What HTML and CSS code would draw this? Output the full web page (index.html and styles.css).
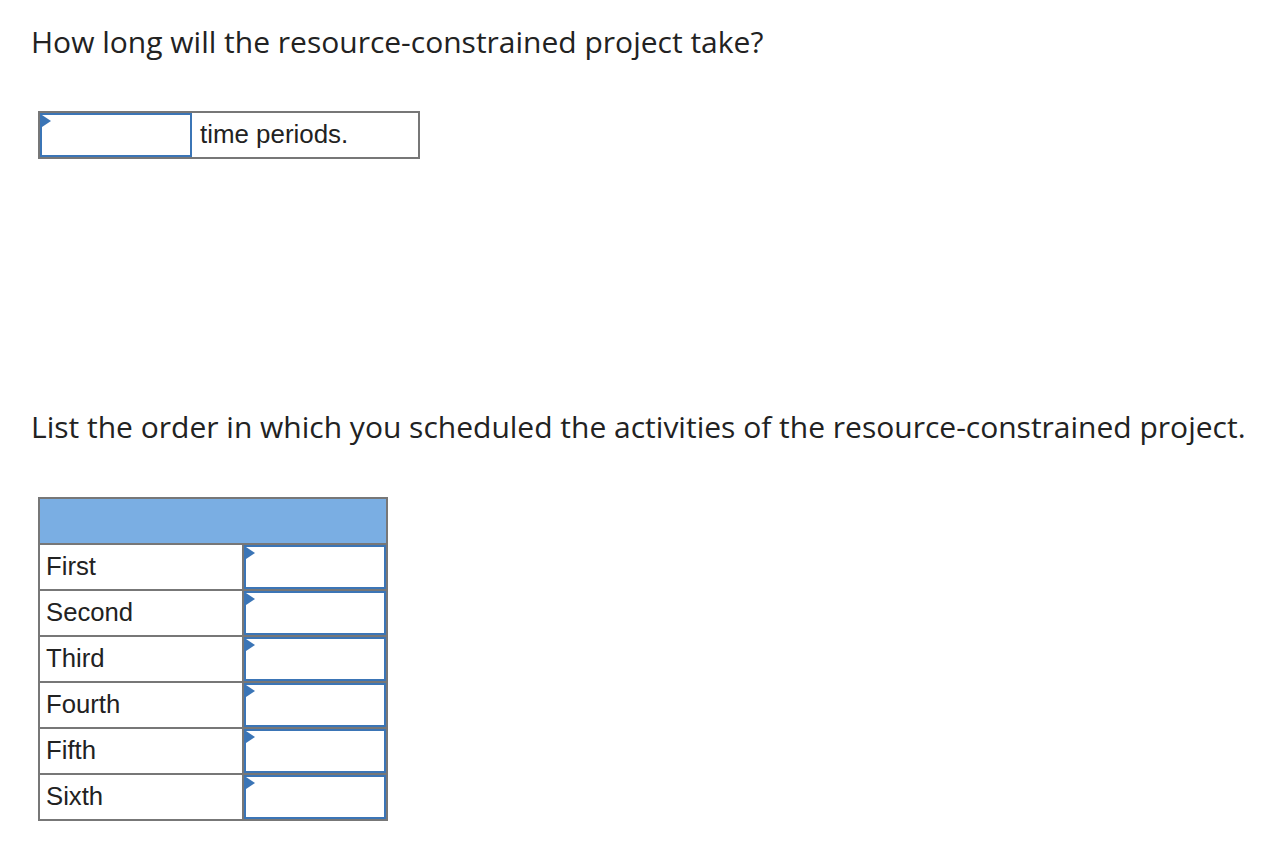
FILE: index.html
```html
<!DOCTYPE html>
<html lang="en">
<head>
<meta charset="utf-8">
<title>Resource-constrained project</title>
<link rel="stylesheet" href="styles.css">
</head>
<body>
<main class="page">
  <p class="question q1">How long will the resource-constrained project take?</p>
  <div class="answer-box">
    <div class="input-cell"><span class="marker"></span></div>
    <div class="text-cell">time periods.</div>
  </div>

  <p class="question q2">List the order in which you scheduled the activities of the resource-constrained project.</p>
  <div class="order-table">
    <div class="header-cell"></div>
    <div class="label-cell">First</div>
    <div class="input-cell"><span class="marker"></span></div>
    <div class="label-cell">Second</div>
    <div class="input-cell"><span class="marker"></span></div>
    <div class="label-cell">Third</div>
    <div class="input-cell"><span class="marker"></span></div>
    <div class="label-cell">Fourth</div>
    <div class="input-cell"><span class="marker"></span></div>
    <div class="label-cell">Fifth</div>
    <div class="input-cell"><span class="marker"></span></div>
    <div class="label-cell">Sixth</div>
    <div class="input-cell"><span class="marker"></span></div>
  </div>
</main>
</body>
</html>
```

FILE: styles.css
```css
html, body {
  margin: 0;
  padding: 0;
  background: #ffffff;
}

.page {
  padding: 0 0 0 31px;
  display: flex;
  flex-direction: column;
  align-items: flex-start;
}

.question {
  margin: 0;
  font-family: "Open Sans", Lato, sans-serif;
  font-size: 30px;
  line-height: 36px;
  color: #222222;
}

.q1 {
  margin-top: 24px;
}

.q2 {
  margin-top: 250px;
}

.answer-box {
  margin-top: 51px;
  margin-left: 7px;
  display: grid;
  grid-template-columns: 152px 226px;
  grid-template-rows: 44px;
  background: #777777;
  padding: 2px;
  font-family: "Liberation Sans", Arial, sans-serif;
  font-size: 25.9px;
  color: #222222;
}

.text-cell {
  background: #ffffff;
  display: flex;
  align-items: center;
  padding-left: 8px;
  padding-bottom: 2px;
}

.input-cell {
  position: relative;
  background: #ffffff;
  border: 2px solid #3b75b6;
}

.marker {
  position: absolute;
  top: 0;
  left: 0;
  width: 0;
  height: 0;
  border-left: 9px solid #3b75b6;
  border-top: 6.5px solid transparent;
  border-bottom: 6.5px solid transparent;
}

.order-table {
  margin-top: 52px;
  margin-left: 7px;
  display: grid;
  grid-template-columns: 202px 142px;
  grid-auto-rows: 44px;
  gap: 2px;
  background: #777777;
  padding: 2px;
  font-family: "Liberation Sans", Arial, sans-serif;
  font-size: 25.7px;
  color: #222222;
}

.header-cell {
  grid-column: 1 / 3;
  background: #7aaee3;
}

.label-cell {
  background: #ffffff;
  display: flex;
  align-items: center;
  padding-left: 6px;
  padding-bottom: 2px;
}
```
